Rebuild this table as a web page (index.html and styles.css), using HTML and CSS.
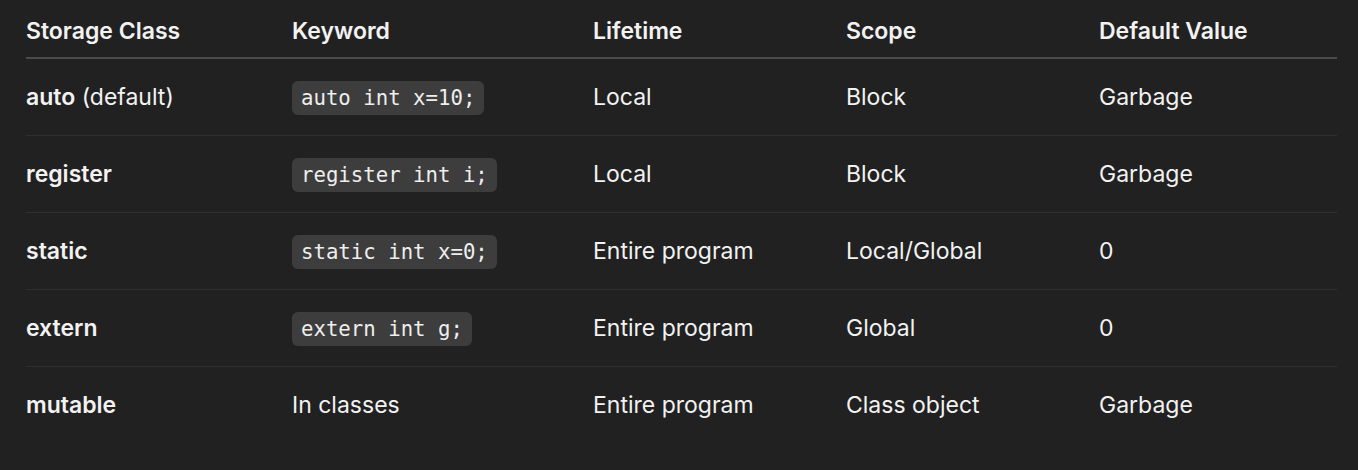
FILE: index.html
```html
<!DOCTYPE html>
<html>
<head>
<meta charset="utf-8">
<link rel="stylesheet" href="styles.css">
</head>
<body>
<div class="table">
  <div class="row head">
    <div class="cell">Storage Class</div>
    <div class="cell">Keyword</div>
    <div class="cell">Lifetime</div>
    <div class="cell">Scope</div>
    <div class="cell">Default Value</div>
  </div>
  <div class="row">
    <div class="cell"><b>auto</b> (default)</div>
    <div class="cell"><code>auto int x=10;</code></div>
    <div class="cell">Local</div>
    <div class="cell">Block</div>
    <div class="cell">Garbage</div>
  </div>
  <div class="row">
    <div class="cell"><b>register</b></div>
    <div class="cell"><code>register int i;</code></div>
    <div class="cell">Local</div>
    <div class="cell">Block</div>
    <div class="cell">Garbage</div>
  </div>
  <div class="row">
    <div class="cell"><b>static</b></div>
    <div class="cell"><code>static int x=0;</code></div>
    <div class="cell">Entire program</div>
    <div class="cell">Local/Global</div>
    <div class="cell">0</div>
  </div>
  <div class="row">
    <div class="cell"><b>extern</b></div>
    <div class="cell"><code>extern int g;</code></div>
    <div class="cell">Entire program</div>
    <div class="cell">Global</div>
    <div class="cell">0</div>
  </div>
  <div class="row last">
    <div class="cell"><b>mutable</b></div>
    <div class="cell">In classes</div>
    <div class="cell">Entire program</div>
    <div class="cell">Class object</div>
    <div class="cell">Garbage</div>
  </div>
</div>
</body>
</html>
```
FILE: styles.css
```css
html, body {
  margin: 0;
  padding: 0;
  background: #212121;
}
body {
  padding: 0 21px 0 26px;
  height: 470px;
  box-sizing: border-box;
  font-family: Inter, "Noto Sans", sans-serif;
  color: #f2f2f2;
  font-size: 23px;
}
.table {
  display: flex;
  flex-direction: column;
}
.row {
  display: grid;
  grid-template-columns: 266px 301px 253px 253px 1fr;
  align-items: center;
  height: 76px;
  border-bottom: 1px solid #2f2f2f;
}
.row.head {
  height: 59px;
  padding-top: 4px;
  box-sizing: border-box;
  border-bottom: 2px solid #4a4a4a;
  font-weight: 600;
}
.row.last {
  border-bottom: none;
}
.cell b {
  font-weight: 600;
}
code {
  font-family: "DejaVu Sans Mono", monospace;
  font-size: 20.7px;
  background: #3d3d3d;
  border-radius: 6px;
  padding: 5px 9px;
  color: #eeeeee;
}
```
